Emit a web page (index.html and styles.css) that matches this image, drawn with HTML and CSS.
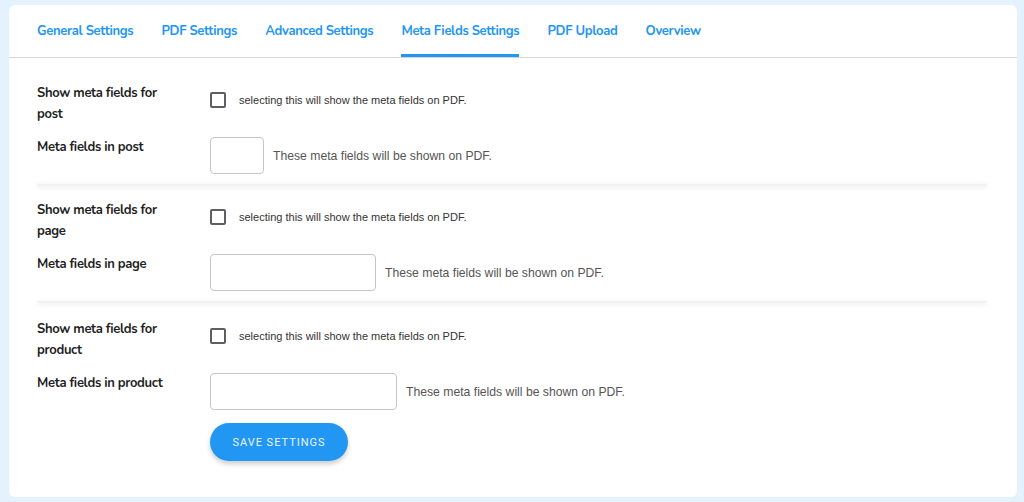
FILE: index.html
```html
<!DOCTYPE html>
<html lang="en">
<head>
<meta charset="utf-8">
<title>Meta Fields Settings</title>
<link rel="stylesheet" href="styles.css">
</head>
<body>
<div class="card">
  <nav class="tabs">
    <a class="tab">General Settings</a>
    <a class="tab">PDF Settings</a>
    <a class="tab">Advanced Settings</a>
    <a class="tab active">Meta Fields Settings</a>
    <a class="tab">PDF Upload</a>
    <a class="tab">Overview</a>
  </nav>
  <form class="content">
    <section class="group">
      <div class="label">Show meta fields for<br>post</div>
      <div class="field check-field"><input type="checkbox" class="check"><span class="hint">selecting this will show the meta fields on PDF.</span></div>
      <div class="label">Meta fields in post</div>
      <div class="field"><input type="text" class="text-input w-sm"><span class="desc">These meta fields will be shown on PDF.</span></div>
    </section>
    <div class="sep"></div>
    <section class="group">
      <div class="label">Show meta fields for<br>page</div>
      <div class="field check-field"><input type="checkbox" class="check"><span class="hint">selecting this will show the meta fields on PDF.</span></div>
      <div class="label">Meta fields in page</div>
      <div class="field"><input type="text" class="text-input w-md"><span class="desc">These meta fields will be shown on PDF.</span></div>
    </section>
    <div class="sep"></div>
    <section class="group group-last">
      <div class="label">Show meta fields for<br>product</div>
      <div class="field check-field"><input type="checkbox" class="check"><span class="hint">selecting this will show the meta fields on PDF.</span></div>
      <div class="label">Meta fields in product</div>
      <div class="field"><input type="text" class="text-input w-lg"><span class="desc">These meta fields will be shown on PDF.</span></div>
      <div class="spacer"></div>
      <div class="field actions"><button type="button" class="save">SAVE SETTINGS</button></div>
    </section>
  </form>
</div>
</body>
</html>
```

FILE: styles.css
```css
* { box-sizing: border-box; }
html, body { margin: 0; }
body {
  background: #e3f2fd;
  padding: 5px 7px 5px 9px;
  font-family: "Nunito", Lato, "Open Sans", sans-serif;
}
.card {
  background: #fff;
  border-radius: 6px;
  height: 492px;
}
.tabs {
  display: flex;
  height: 53px;
  padding-left: 14px;
  border-bottom: 1px solid #d6d6d6;
}
.tab {
  margin: 0 14px;
  padding-top: 17px;
  height: 52px;
  line-height: 18px;
  font-size: 13px;
  font-weight: 700;
  letter-spacing: -0.3px;
  color: #2196f3;
  border-bottom: 3px solid transparent;
  cursor: pointer;
}
.tab.active { border-bottom-color: #2196f3; }
.content {
  padding: 25px 0 0 28px;
}
.group {
  display: grid;
  grid-template-columns: 173px 1fr;
  row-gap: 12px;
}
.group-last { padding-top: 2px; }
.label {
  font-size: 13px;
  font-weight: 700;
  letter-spacing: -0.3px;
  line-height: 21px;
  color: #1f1f1f;
}
.field {
  display: flex;
  align-items: center;
}
.check-field {
  align-self: start;
  margin-top: 9px;
}
.actions { margin-top: 1px; }
.check {
  appearance: none;
  -webkit-appearance: none;
  margin: 0;
  width: 16px;
  height: 16px;
  border: 2px solid #5f5f5f;
  border-radius: 2px;
  background: #fff;
}
.hint {
  margin-left: 13px;
  font-family: "Liberation Sans", Arial, sans-serif;
  font-size: 11px;
  color: #333;
}
.text-input {
  height: 37px;
  margin: 0;
  border: 1px solid #c6c6c6;
  border-radius: 4px;
  background: #fff;
}
.w-sm { width: 54px; }
.w-md { width: 166px; }
.w-lg { width: 187px; }
.desc {
  margin-left: 9px;
  font-family: "Liberation Sans", Arial, sans-serif;
  font-size: 12.2px;
  color: #555;
}
.sep {
  height: 2px;
  margin: 10px 30px 14px 0;
  background: rgba(0,0,0,0.05);
  box-shadow: 0 1px 5px rgba(0,0,0,0.12);
}
.save {
  width: 138px;
  height: 38px;
  border: none;
  border-radius: 19px;
  background: #2196f3;
  color: #e8f4fe;
  font-family: Roboto, sans-serif;
  font-size: 11px;
  letter-spacing: 1px;
  box-shadow: 0 3px 5px rgba(0,0,0,0.2);
}
```
